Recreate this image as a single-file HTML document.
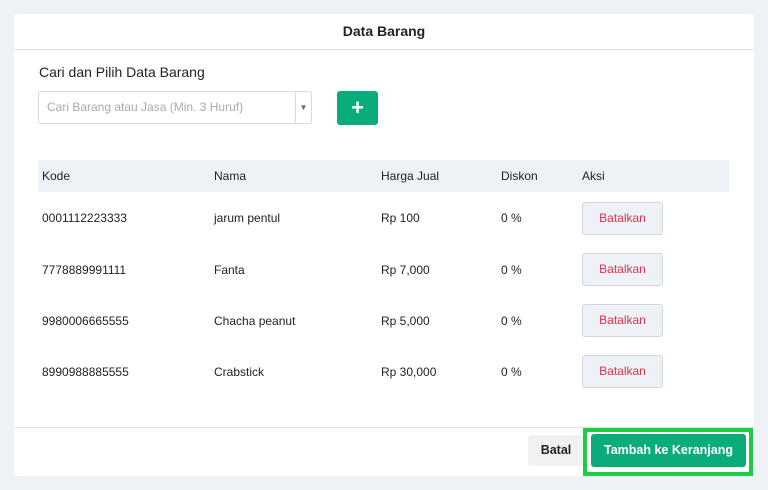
<!DOCTYPE html><html><head><style>
body{margin:0;width:768px;height:490px;background:#eef1f5;font-family:"Liberation Sans",sans-serif;position:relative;overflow:hidden;color:#222}
.card{position:absolute;left:14px;top:14px;width:740px;height:462px;background:#fff;border-radius:4px}
.abs{position:absolute}
.hd{left:0;top:0;width:740px;height:35px;border-bottom:1px solid #dde1e6;text-align:center;line-height:35px;font-size:14px;font-weight:bold;color:#222}
.lbl{left:25px;top:50px;font-size:14px}
.sel{left:24px;top:77px;width:264px;height:31px;border:1px solid #d6d9de;border-radius:3px;font-size:12px;color:#aaa;line-height:31px;padding-left:8px}
.sel .ar{position:absolute;right:0;top:0;width:15px;height:31px;border-left:1px solid #d6d9de;font-size:8px;color:#666;text-align:center}
.plus{left:323px;top:77px;width:41px;height:34px;background:#0aac7b;border-radius:3px;color:#fff;font-size:22px;font-weight:bold;text-align:center;line-height:33px}
.th{left:24px;top:146px;width:691px;height:32px;background:#eef1f5}
.t{position:absolute;font-size:12px}
.bt{position:absolute;left:568px;width:79px;height:31px;background:#eef1f5;border:1px solid #d3d7dc;border-radius:3px;color:#e0334f;font-size:12px;text-align:center;line-height:31px}
.ft{left:0;top:413px;width:740px;border-top:1px solid #dde1e6}
.batal{left:514px;top:421px;width:56px;height:31px;background:#f0f1f3;border-radius:3px;font-weight:bold;font-size:12.5px;text-align:center;line-height:31px}
.out{left:569px;top:414px;width:162px;height:40px;border:4px solid #1ccd44}
.tk{left:577px;top:420px;width:155px;height:33px;background:#0aac7b;border-radius:3px;color:#fff;font-weight:bold;font-size:12.5px;text-align:center;line-height:33px}
</style></head><body><div class="card">
<div class="abs hd">Data Barang</div>
<div class="abs lbl">Cari dan Pilih Data Barang</div>
<div class="abs sel">Cari Barang atau Jasa (Min. 3 Huruf)<div class="ar">▼</div></div>
<div class="abs plus">+</div>
<div class="abs th"></div>
<div class="t" style="left:28px;top:155px">Kode</div><div class="t" style="left:200px;top:155px">Nama</div><div class="t" style="left:367px;top:155px">Harga Jual</div><div class="t" style="left:487px;top:155px">Diskon</div><div class="t" style="left:568px;top:155px">Aksi</div>

<div class="t" style="left:28px;top:197px">0001112223333</div><div class="t" style="left:200px;top:197px">jarum pentul</div><div class="t" style="left:367px;top:197px">Rp 100</div><div class="t" style="left:487px;top:197px">0 %</div><div class="bt" style="top:188px">Batalkan</div>
<div class="t" style="left:28px;top:249px">7778889991111</div><div class="t" style="left:200px;top:249px">Fanta</div><div class="t" style="left:367px;top:249px">Rp 7,000</div><div class="t" style="left:487px;top:249px">0 %</div><div class="bt" style="top:239px">Batalkan</div>
<div class="t" style="left:28px;top:300px">9980006665555</div><div class="t" style="left:200px;top:300px">Chacha peanut</div><div class="t" style="left:367px;top:300px">Rp 5,000</div><div class="t" style="left:487px;top:300px">0 %</div><div class="bt" style="top:290px">Batalkan</div>
<div class="t" style="left:28px;top:351px">8990988885555</div><div class="t" style="left:200px;top:351px">Crabstick</div><div class="t" style="left:367px;top:351px">Rp 30,000</div><div class="t" style="left:487px;top:351px">0 %</div><div class="bt" style="top:341px">Batalkan</div>

<div class="abs ft"></div>
<div class="abs batal">Batal</div>
<div class="abs out"></div>
<div class="abs tk">Tambah ke Keranjang</div>
</div></body></html>
